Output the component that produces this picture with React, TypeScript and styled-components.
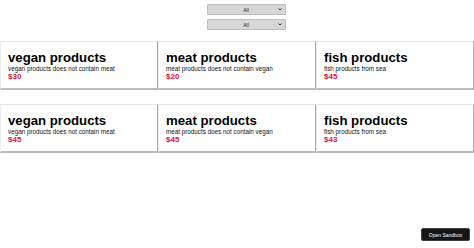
import React from "react";
import styled, { createGlobalStyle } from "styled-components";

const Global = createGlobalStyle`
  html, body { margin: 0; padding: 0; background: #fff; }
  body { font-family: "Liberation Sans", Arial, sans-serif; }
`;

const Page = styled.div`
  display: flex;
  flex-direction: column;
  padding-top: 4px;
`;

const Filters = styled.div`
  display: flex;
  flex-direction: column;
  align-items: center;
  gap: 4px;
  padding-left: 18px;
`;

const SelectBox = styled.div`
  position: relative;
  width: 79px;
  height: 11px;
  box-sizing: border-box;
  background: #d7d7d7;
  border: 1px solid #bdbdbd;
  border-radius: 1px;
  display: flex;
  align-items: center;
  justify-content: center;
  font-size: 5px;
  color: #222;
`;

const Chevron = styled.svg`
  position: absolute;
  right: 3px;
  top: 3px;
`;

const Rows = styled.div`
  display: flex;
  flex-direction: column;
  gap: 14px;
  margin-top: 11px;
`;

const Row = styled.div`
  display: grid;
  grid-template-columns: repeat(3, 1fr);
`;

const Card = styled.div`
  height: 49px;
  box-sizing: border-box;
  border-top: 1px solid #e4e4e4;
  border-left: 1px solid #ececec;
  border-right: 1px solid #a9a9a9;
  border-bottom: 2px solid #bcbcbc;
  padding: 8px 0 0 7px;
  display: flex;
  flex-direction: column;
`;

const Title = styled.div`
  font-weight: bold;
  font-size: 13.2px;
  line-height: 15px;
  color: #000;
`;

const Desc = styled.div`
  font-size: 6.3px;
  line-height: 7px;
  color: #111;
`;

const Price = styled.div`
  font-size: 8px;
  line-height: 9px;
  font-weight: bold;
  color: #dc143c;
`;

const SandboxButton = styled.div`
  position: fixed;
  right: 4px;
  bottom: 7px;
  width: 49px;
  height: 13px;
  box-sizing: border-box;
  background: #151515;
  border: 1px solid #444;
  border-radius: 2px;
  color: #fff;
  font-size: 5px;
  display: flex;
  align-items: center;
  justify-content: center;
`;

type Product = { title: string; desc: string; price: string };

const rows: Product[][] = [
  [
    { title: "vegan products", desc: "vegan products does not contain meat", price: "$30" },
    { title: "meat products", desc: "meat products does not contain vegan", price: "$20" },
    { title: "fish products", desc: "fish products from sea", price: "$45" },
  ],
  [
    { title: "vegan products", desc: "vegan products does not contain meat", price: "$45" },
    { title: "meat products", desc: "meat products does not contain vegan", price: "$45" },
    { title: "fish products", desc: "fish products from sea", price: "$43" },
  ],
];

const Select = () => (
  <SelectBox>
    All
    <Chevron width="4" height="3" viewBox="0 0 4 3">
      <path d="M0.5 0.5 L2 2 L3.5 0.5" stroke="#222" strokeWidth="0.9" fill="none" />
    </Chevron>
  </SelectBox>
);

export default function App() {
  return (
    <Page>
      <Global />
      <Filters>
        <Select />
        <Select />
      </Filters>
      <Rows>
        {rows.map((r, i) => (
          <Row key={i}>
            {r.map((p, j) => (
              <Card key={j}>
                <Title>{p.title}</Title>
                <Desc>{p.desc}</Desc>
                <Price>{p.price}</Price>
              </Card>
            ))}
          </Row>
        ))}
      </Rows>
      <SandboxButton>Open Sandbox</SandboxButton>
    </Page>
  );
}
